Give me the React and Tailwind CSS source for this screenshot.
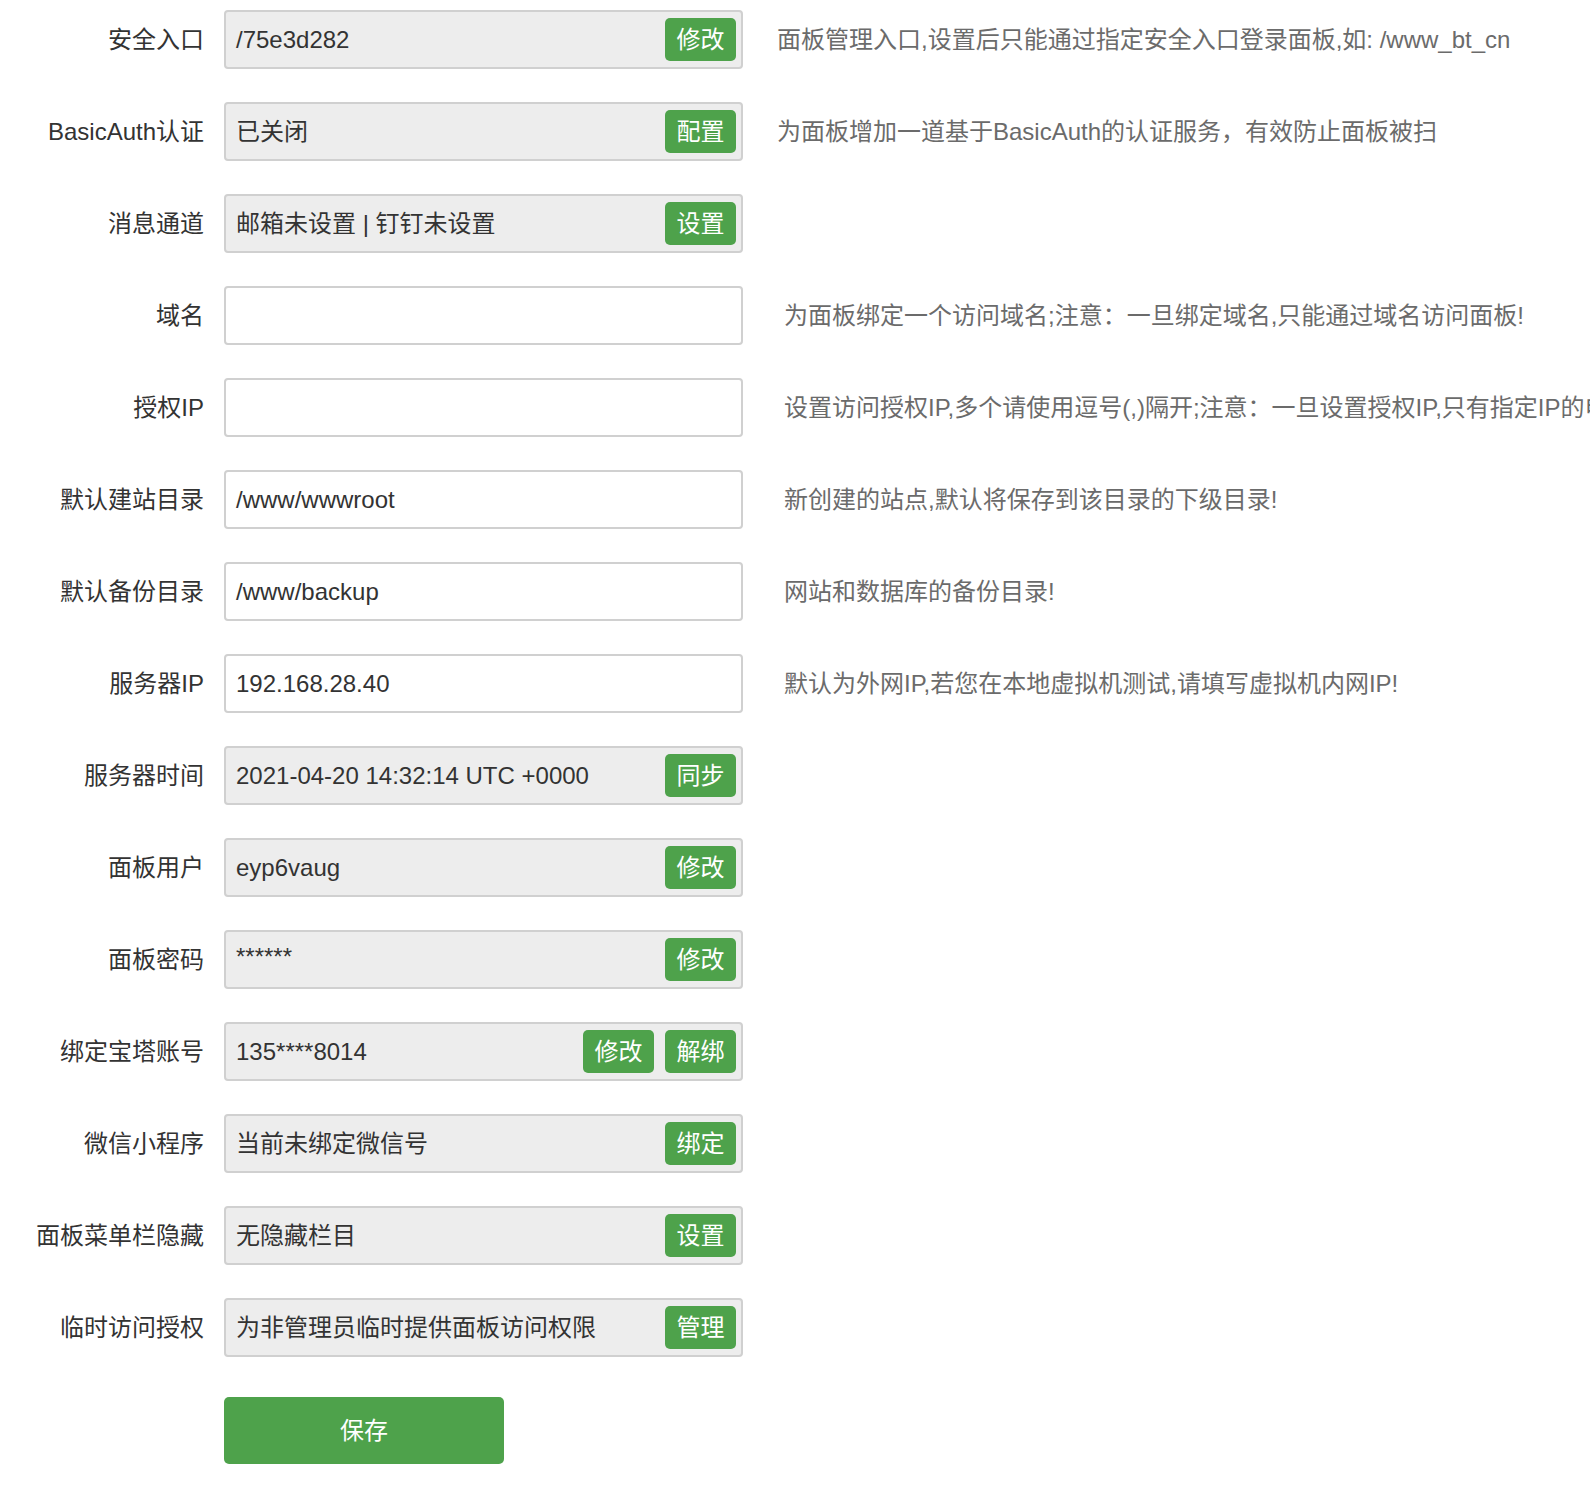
import React from "react";

const rows = [
  { label: "安全入口", value: "/75e3d282", ro: true, btns: ["修改"], desc: "面板管理入口,设置后只能通过指定安全入口登录面板,如: /www_bt_cn", dm: "ml-[34px]" },
  { label: "BasicAuth认证", value: "已关闭", ro: true, btns: ["配置"], desc: "为面板增加一道基于BasicAuth的认证服务，有效防止面板被扫", dm: "ml-[34px]" },
  { label: "消息通道", value: "邮箱未设置 | 钉钉未设置", ro: true, btns: ["设置"] },
  { label: "域名", value: "", ro: false, desc: "为面板绑定一个访问域名;注意：一旦绑定域名,只能通过域名访问面板!", dm: "ml-[41px]" },
  { label: "授权IP", value: "", ro: false, desc: "设置访问授权IP,多个请使用逗号(,)隔开;注意：一旦设置授权IP,只有指定IP的电脑能访问面板!", dm: "ml-[41px]" },
  { label: "默认建站目录", value: "/www/wwwroot", ro: false, desc: "新创建的站点,默认将保存到该目录的下级目录!", dm: "ml-[41px]" },
  { label: "默认备份目录", value: "/www/backup", ro: false, desc: "网站和数据库的备份目录!", dm: "ml-[41px]" },
  { label: "服务器IP", value: "192.168.28.40", ro: false, desc: "默认为外网IP,若您在本地虚拟机测试,请填写虚拟机内网IP!", dm: "ml-[41px]" },
  { label: "服务器时间", value: "2021-04-20 14:32:14 UTC +0000", ro: true, btns: ["同步"] },
  { label: "面板用户", value: "eyp6vaug", ro: true, btns: ["修改"] },
  { label: "面板密码", value: "******", ro: true, btns: ["修改"], pw: true },
  { label: "绑定宝塔账号", value: "135****8014", ro: true, btns: ["修改", "解绑"] },
  { label: "微信小程序", value: "当前未绑定微信号", ro: true, btns: ["绑定"] },
  { label: "面板菜单栏隐藏", value: "无隐藏栏目", ro: true, btns: ["设置"] },
  { label: "临时访问授权", value: "为非管理员临时提供面板访问权限", ro: true, btns: ["管理"] },
];

const font = { fontFamily: '"Liberation Sans", "Noto Sans CJK SC", sans-serif' };

function Row({ r }) {
  return (
    <div className="flex items-center h-[59px] whitespace-nowrap">
      <div className="w-[204px] shrink-0 text-right text-[24px] leading-none text-[#333]">{r.label}</div>
      <div
        className={
          "ml-[20px] w-[519px] shrink-0 h-[59px] flex items-center border-2 border-[#d0d0d0] rounded-[4px] pl-[10px] pr-[5px] " +
          (r.ro ? "bg-[#ededed]" : "bg-white")
        }
      >
        <div className={"flex-1 text-[24px] leading-none text-[#333] " + (r.pw ? "pb-[6px]" : "")}>{r.value}</div>
        {r.btns && (
          <div className="flex gap-[11px]">
            {r.btns.map((b, i) => (
              <div
                key={i}
                className="w-[71px] h-[43px] rounded-[5px] bg-[#4ea24b] text-white text-[24px] leading-none flex items-center justify-center"
              >
                {b}
              </div>
            ))}
          </div>
        )}
      </div>
      {r.desc && (
        <div className={r.dm + " text-[24px] leading-none text-[#6b6b6b]"}>{r.desc}</div>
      )}
    </div>
  );
}

export default function App() {
  return (
    <div className="w-[1590px] h-[1508px] bg-white overflow-hidden" style={font}>
      <div className="pt-[10px] flex flex-col gap-[33px]">
        {rows.map((r, i) => (
          <Row key={i} r={r} />
        ))}
      </div>
      <div className="mt-[40px] ml-[224px] w-[280px] h-[67px] rounded-[5px] bg-[#4ea24b] text-white text-[24px] flex items-center justify-center">
        保存
      </div>
    </div>
  );
}
